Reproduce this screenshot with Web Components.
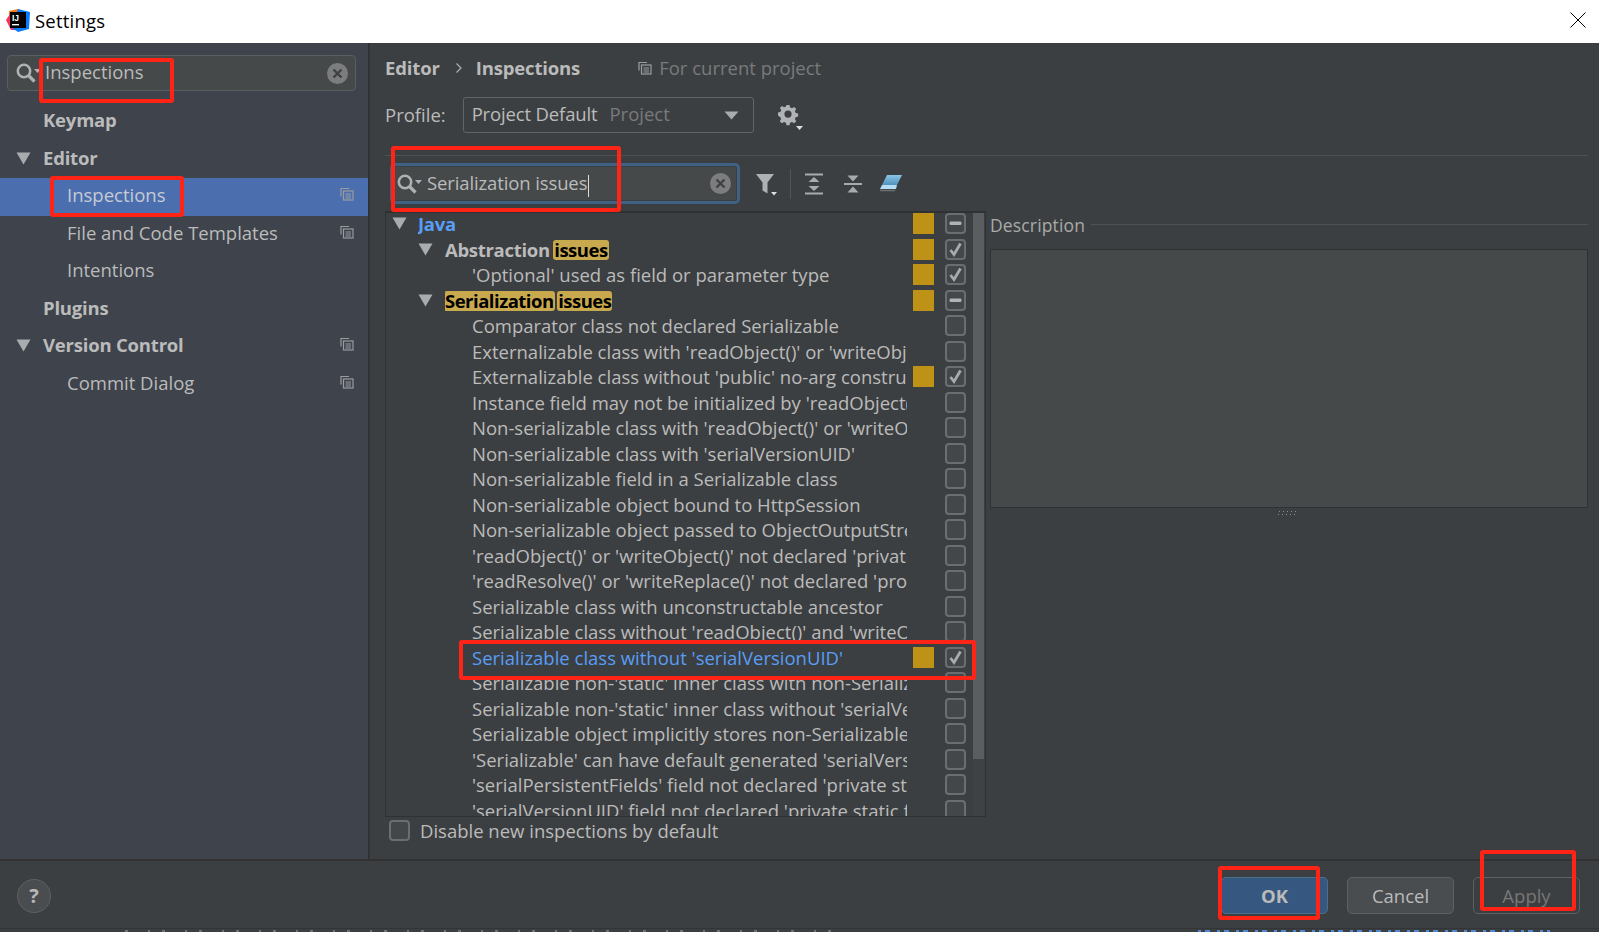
<!DOCTYPE html>
<html><head><meta charset="utf-8">
<style>
html,body{margin:0;padding:0;background:#3c3f41}
body{width:1599px;height:932px;overflow:hidden;font-family:"Open Sans","Noto Sans",sans-serif;font-size:18.5px;color:#bbb}
</style></head>
<body>
<settings-dialog></settings-dialog>
<script>
const FONT='"Open Sans","Noto Sans",sans-serif';
const def=(name,html)=>{customElements.define(name,class extends HTMLElement{
  connectedCallback(){ if(this.shadowRoot)return; const r=this.attachShadow({mode:'open'}); r.innerHTML=typeof html==='function'?html(this):html; }
});};
const copyIcon=`<svg width="14" height="14" viewBox="0 0 14 14" fill="none" stroke="#9a9da0" stroke-width="1.2"><path d="M1 9.500V1.500h8"/><rect x="3.500" y="4" width="9.500" height="9"/><path d="M5.500 7h5.500M5.500 9h5.500M5.500 11h5.500" stroke-width="1"/></svg>`;
const tri=`<svg width="15" height="13" viewBox="0 0 15 13" style="display:block"><path d="M0.500 0.500h14L7.500 12.500z" fill="#a9acae"/></svg>`;

def('x-titlebar',`<style>:host{display:flex;align-items:center;height:43px;background:#fff;color:#000;font:18.500px ${FONT};padding:0 13px 3px 6px;box-sizing:border-box}
.t{margin-left:5px;flex:1;letter-spacing:.2px}svg{display:block}</style>
<svg width="24" height="24" viewBox="0 0 24 24"><path d="M3 3L12 1 14 8 3 11z" fill="#f97a12"/><path d="M0 12L6 3 12 22 5 22z" fill="#fe315d"/><path d="M12 1L24 4 23 21 12 24 6 20z" fill="#087cfa"/><rect x="4" y="4" width="16" height="16" fill="#000"/><text x="6" y="13" font-family="Liberation Sans" font-weight="700" font-size="8.500" fill="#fff">IJ</text><rect x="6" y="16" width="7" height="1.400" fill="#fff"/></svg>
<span class="t">Settings</span>
<svg width="16" height="16" viewBox="0 0 16 16"><path d="M.5.5l15 15M15.500.5l-15 15" stroke="#000" stroke-width="1"/></svg>`);

const searchIcon=`<svg width="26" height="20" viewBox="0 0 26 20" fill="none"><circle cx="8" cy="8" r="6.200" stroke="#aeb0b2" stroke-width="2.600"/><path d="M12.500 12.500l6 6" stroke="#aeb0b2" stroke-width="3.200"/><path d="M18 6h7l-3.500 4z" fill="#aeb0b2"/></svg>`;
const clearIcon=`<svg width="21" height="21" viewBox="0 0 21 21"><circle cx="10.500" cy="10.500" r="10.500" fill="#7b7d7f"/><path d="M6.500 6.500l8 8M14.500 6.500l-8 8" stroke="#3f4142" stroke-width="2.400"/></svg>`;
def('x-search',`<style>:host{display:flex;align-items:center;box-sizing:border-box;background:#45494a;font:18.500px ${FONT};color:#bbb;
 width:var(--w);height:var(--h);border:var(--bd,1.500px solid #5b5e60);border-radius:var(--r,4px);padding:0 var(--pr,7px) 0 var(--pl,8px);outline:var(--ol,none);flex:none}
.v{flex:1;margin-left:var(--gap,2px);white-space:nowrap;padding-bottom:var(--pb,0);letter-spacing:var(--ls,0)}
svg{display:block;flex:none}</style>
${searchIcon}<span class="v"><slot></slot></span>${clearIcon}`);

def('x-nav',h=>{const lv=h.getAttribute('lv');const w=lv==='0'?43:67;return `<style>:host{display:flex;align-items:center;box-sizing:border-box;height:37.500px;padding-bottom:4px;font:18.500px ${FONT};color:#bbb}
:host([sel]){background:#4b6eaf;color:#c5cbd3}
:host([lv="0"]){font-weight:700;letter-spacing:-.2px}
.lead{flex:none;box-sizing:border-box;width:${w}px;padding-left:16px;margin-top:2px}
.tx{flex:1}
.cp{flex:none;margin:0 14px 1.500px 0;display:block;line-height:0}</style>
<span class="lead">${h.hasAttribute('open')?tri:''}</span><span class="tx"><slot></slot></span>${h.hasAttribute('proj')?`<span class="cp">${copyIcon}</span>`:''}`});

def('x-sidebar',`<style>:host{display:block;width:370px;flex:none;background:#3e434c;border-right:2px solid #323232;box-sizing:border-box;padding-top:12px}
x-search{--w:349px;--h:36px;margin-left:7px;margin-bottom:12px;--pb:4px;--gap:3px}nav{display:block}</style>
<x-search>Inspections</x-search>
<nav><x-nav lv="0">Keymap</x-nav><x-nav lv="0" open>Editor</x-nav><x-nav lv="1" sel proj>Inspections</x-nav><x-nav lv="1" proj>File and Code Templates</x-nav><x-nav lv="1">Intentions</x-nav><x-nav lv="0">Plugins</x-nav><x-nav lv="0" open proj>Version Control</x-nav><x-nav lv="1" proj>Commit Dialog</x-nav></nav>`);

def('x-check',h=>{const s=h.getAttribute('s');return `<style>:host{display:block;box-sizing:border-box;width:21px;height:21px;border:2px solid #6b6e70;border-radius:4px;background:#43474a;flex:none}svg{display:block;margin:1px}</style>
${s==='c'?`<svg width="15" height="15" viewBox="0 0 15 15"><path d="M2.500 8l3.500 4.500L12.500 1.500" fill="none" stroke="#a8aaac" stroke-width="2.800"/></svg>`:s==='m'?`<svg width="15" height="15" viewBox="0 0 15 15"><rect x="1.500" y="5.500" width="12" height="3.600" rx="1.400" fill="#b0b2b4"/></svg>`:''}`});

def('x-row',h=>{const l=+h.getAttribute('lv');const left={0:32,1:59,2:86}[l];const triLeft={0:6,1:32,2:0}[l];
return `<style>:host{display:flex;align-items:center;height:25.500px;box-sizing:border-box;font:18.500px ${FONT};color:#bbb;white-space:nowrap}
:host([bold]){font-weight:700;letter-spacing:-.3px}
:host([blue]){color:#589df6}
.lead{flex:none;box-sizing:border-box;width:${left}px;padding-left:${triLeft}px}
.tx{flex:none;width:${521-left}px;overflow:hidden;line-height:25px}
.y{flex:none;margin-left:6px;width:21px;height:21px}
:host([y]) .y{background:#be9117}
x-check{margin-left:11px}</style>
<span class="lead">${h.hasAttribute('open')?tri:''}</span><span class="tx"><slot></slot></span><span class="y"></span><x-check s="${h.getAttribute('c')||''}"></x-check>`});

def('x-hl',`<style>:host{display:inline-block;background:#c9a94e;color:#000;border-radius:3px;padding:0 1px;line-height:20px;margin:0 -1px;letter-spacing:-.5px}</style><slot></slot>`);

const rows=[
 ['0','Java','m',1,'blue bold open'],
 ['1','Abstraction <x-hl>issues</x-hl>','c',1,'bold open'],
 ['2',"'Optional' used as field or parameter type",'c',1,''],
 ['1','<x-hl>Serialization</x-hl> <x-hl>issues</x-hl>','m',1,'bold open'],
 ['2','Comparator class not declared Serializable','',0,''],
 ['2',"Externalizable class with 'readObject()' or 'writeObject()'",'',0,''],
 ['2',"Externalizable class without 'public' no-arg constructor",'c',1,''],
 ['2',"Instance field may not be initialized by 'readObject()'",'',0,''],
 ['2',"Non-serializable class with 'readObject()' or 'writeObject()'",'',0,''],
 ['2',"Non-serializable class with 'serialVersionUID'",'',0,''],
 ['2','Non-serializable field in a Serializable class','',0,''],
 ['2','Non-serializable object bound to HttpSession','',0,''],
 ['2','Non-serializable object passed to ObjectOutputStream','',0,''],
 ['2',"'readObject()' or 'writeObject()' not declared 'private'",'',0,''],
 ['2',"'readResolve()' or 'writeReplace()' not declared 'protected'",'',0,''],
 ['2','Serializable class with unconstructable ancestor','',0,''],
 ['2',"Serializable class without 'readObject()' and 'writeObject()'",'',0,''],
 ['2',"Serializable class without 'serialVersionUID'",'c',1,'blue'],
 ['2',"Serializable non-'static' inner class with non-Serializable outer",'',0,''],
 ['2',"Serializable non-'static' inner class without 'serialVersionUID'",'',0,''],
 ['2','Serializable object implicitly stores non-Serializable object','',0,''],
 ['2',"'Serializable' can have default generated 'serialVersionUID'",'',0,''],
 ['2',"'serialPersistentFields' field not declared 'private static'",'',0,''],
 ['2',"'serialVersionUID' field not declared 'private static final'",'',0,''],
];
def('x-tree',`<style>:host{display:block;position:relative;box-sizing:border-box;width:601px;height:606px;border:1px solid #2f3133;border-top:2px solid #2f3133;overflow:hidden}
.rows{margin-top:-2px}
.sb{position:absolute;left:587px;top:0;bottom:0;width:11px;background:#3f4244}.th{position:absolute;left:587px;top:0;height:546px;width:11px;background:#5a5e60}</style>
<div class="sb"></div><div class="th"></div>
<div class="rows">${rows.map(r=>`<x-row lv="${r[0]}" c="${r[2]}" ${r[3]?'y':''} ${r[4]}>${r[1]}</x-row>`).join('')}</div>`);

def('x-btn',`<style>:host{display:flex;align-items:center;justify-content:center;box-sizing:border-box;width:107px;height:37px;border-radius:5px;border:1.500px solid #5e6163;background:#4a4d4f;color:#bbb;font:18.500px ${FONT}}
:host([primary]){background:#365880;border-color:#4c708c;font-weight:700}
:host([disabled]){background:transparent;color:#777;border-color:#5e6163}</style><slot></slot>`);

def('x-toolbar',`<style>:host{display:flex;align-items:center;height:55px;margin-left:2px}
x-search{--w:344px;--h:35px;--bd:1px solid #3c3f41;--ol:3px solid #3e6185;--r:2px;--gap:4px;--pl:3px;--pr:5px;margin:0 0 0 6px;--pb:0px;--ls:-.12px}
.ic{display:flex;align-items:center;margin-left:19px}
svg{display:block}.c{display:inline-block;width:1px;height:22px;background:#ddd;vertical-align:middle;margin-left:1px}
.dv{width:1px;height:30px;background:#515557;margin:0 13px 0 12px}</style>
<x-search>Serialization issues<span class="c"></span></x-search>
<div class="ic">
<svg width="22" height="24" viewBox="0 0 22 24"><path d="M0 2h18l-6.500 8.500v11l-5-3v-8z" fill="#aeb0b2"/><path d="M15 20h6l-3 3.500z" fill="#ddd"/></svg>
<div class="dv"></div>
<svg width="20" height="22" viewBox="0 0 20 22"><path d="M1 1.500h18M1 20.500h18" stroke="#a8aaac" stroke-width="2"/><path d="M10 4l5.500 5h-11zM10 18l5.500-5h-11z" fill="#a8aaac"/></svg>
<svg style="margin-left:19px" width="20" height="22" viewBox="0 0 20 22"><path d="M1 11h18" stroke="#a8aaac" stroke-width="2"/><path d="M10 8.500l-5.500-6h11zM10 13.500l5.500 6h-11z" fill="#a8aaac"/></svg>
<svg style="margin-left:16px" width="24" height="20" viewBox="0 0 24 20"><defs><linearGradient id="er" x1="0" y1="0" x2="0" y2="1"><stop offset="0" stop-color="#8cc4e4"/><stop offset="1" stop-color="#4e93bd"/></linearGradient></defs><path d="M8 1h15l-5 10H3z" fill="url(#er)"/><path d="M3 11h15l-1 4H1z" fill="#b5dcf2"/><path d="M1 16.500h15" stroke="#6d7072" stroke-width="1.500"/></svg>
</div>`);

def('x-content',`<style>:host{display:block;flex:1;min-width:0;box-sizing:border-box;padding:0 11px 0 15px;font:18.500px ${FONT};color:#bbb}
.crumb{display:flex;align-items:center;height:25px;margin-top:12px;white-space:nowrap}
.b{font-weight:700;letter-spacing:-.15px}.chev{margin:0 13px 0 15px;display:block}
.hint{color:#787a7c;margin-left:7px}.hintic{margin-left:58px;display:block;line-height:0}
.profile{display:flex;align-items:center;margin-top:17px}
.lab{padding-bottom:2px}
.combo{display:flex;align-items:center;box-sizing:border-box;width:291px;height:36px;margin-left:17px;border:1.500px solid #646464;border-radius:3px;padding:0 14px 0 8px}
.combo span{padding-bottom:4px;letter-spacing:-.15px}
.combo i{font-style:normal;color:#787a7c;margin-left:12px;flex:1;padding-bottom:4px}
.gear{margin:4px 0 0 24px;display:block}
.sep{height:1px;background:#4f5254;margin-top:22px}
.main{display:flex;gap:4px}
.desc{flex:1;min-width:0}
.dh{display:flex;align-items:center;box-sizing:border-box;height:38px;padding-bottom:11px;color:#aaa;letter-spacing:.15px;font-size:17.500px}
.dh:after{content:"";flex:1;height:1px;background:#4f5254;margin-left:6px}
.box{height:259px;background:#45494a;border:1.500px solid #2f3133;box-sizing:border-box}
.dots{height:5px;margin-top:3px}.dots svg{display:block;margin:0 auto}
.dis{display:flex;align-items:center;gap:10px;margin-top:2px;height:22px}
.dis x-check{margin-left:4px}</style>
<div class="crumb"><span class="b">Editor</span><svg class="chev" width="8" height="12" viewBox="0 0 8 12"><path d="M1.500 1.500L6 6l-4.500 4.500" fill="none" stroke="#aaa" stroke-width="1.300"/></svg><span class="b">Inspections</span>
<span class="hintic">${copyIcon}</span><span class="hint">For current project</span></div>
<div class="profile"><span class="lab">Profile:</span><div class="combo"><span>Project Default</span><i>Project</i><svg width="15" height="9" viewBox="0 0 15 9"><path d="M.5.500h14L7.500 8.500z" fill="#a9acae"/></svg></div>
<svg class="gear" width="26" height="26" viewBox="0 0 26 26"><path fill="#b0b2b4" fill-rule="evenodd" d="M8.500 1h3l.6 2.400 1.900.8 2.100-1.300 2.100 2.100-1.300 2.100.8 1.900 2.400.6v3l-2.400.6-.8 1.900 1.300 2.100-2.100 2.100-2.100-1.300-1.900.8-.6 2.400h-3l-.6-2.400-1.900-.8-2.100 1.300-2.100-2.100 1.300-2.100-.8-1.900L0 11.600v-3l2.400-.6.8-1.900L1.900 4l2.100-2.100 2.100 1.300 1.900-.8zM10 6.500a3.600 3.600 0 1 0 0 7.200 3.600 3.600 0 0 0 0-7.200z"/><path d="M18 22h7l-3.500 4z" fill="#ddd"/></svg></div>
<div class="sep"></div>
<x-toolbar></x-toolbar>
<div class="main"><div><x-tree></x-tree>
<div class="dis"><x-check></x-check><span>Disable new inspections by default</span></div></div>
<div class="desc"><div class="dh">Description</div><div class="box"></div><div class="dots"><svg width="22" height="5" viewBox="0 0 22 5" fill="#8a8c8e"><path d="M1 0h1v1H1zM5 0h1v1H5zM9 0h1v1H9zM13 0h1v1h-1zM17 0h1v1h-1zM0 3h1v1H0zM4 3h1v1H4zM8 3h1v1H8zM12 3h1v1h-1zM16 3h1v1h-1z"/></svg></div></div></div>`);

def('x-footer',`<style>:host{display:flex;align-items:center;box-sizing:border-box;height:69px;border-top:2px solid #323232;padding:2px 19px 0 17px;gap:19px}
.help{box-sizing:border-box;width:34px;height:34px;border-radius:50%;border:1.500px solid #5e6163;background:#4a4d4f;display:flex;align-items:center;justify-content:center;font:700 20px ${FONT};color:#b5b7b9;margin-right:auto}</style>
<div class="help">?</div><x-btn primary>OK</x-btn><x-btn>Cancel</x-btn><x-btn disabled>Apply</x-btn>`);

def('x-cutoff',`<style>:host{display:flex;box-sizing:border-box;height:4px;border-top:1px solid #323436;background:#3c3f41;align-items:flex-end}
.g,.b{height:2px}
.g{margin-left:125px;width:712px;background:repeating-linear-gradient(90deg,#6f7274 0 3px,transparent 3px 23px,#6f7274 23px 25px,transparent 25px 37px)}
.b{margin-left:361px;width:352px;background:repeating-linear-gradient(90deg,#4f88d0 0 3px,transparent 3px 7px,#4f88d0 7px 12px,transparent 12px 19px)}</style><span class="g"></span><span class="b"></span>`);

def('x-mark',`<style>:host{position:absolute;box-sizing:border-box;border:4px solid #ff2415;border-radius:3px;pointer-events:none}</style>`);

def('settings-dialog',`<style>:host{display:flex;flex-direction:column;width:1599px;height:932px;position:relative;overflow:hidden;background:#3c3f41}
.body{display:flex;height:816px;flex:none}</style>
<x-titlebar></x-titlebar>
<div class="body"><x-sidebar></x-sidebar><x-content></x-content></div>
<x-footer></x-footer>
<x-cutoff></x-cutoff>
<x-mark style="left:39px;top:58px;width:135px;height:45px"></x-mark>
<x-mark style="left:50px;top:176px;width:134px;height:41px"></x-mark>
<x-mark style="left:391px;top:146px;width:230px;height:66px"></x-mark>
<x-mark style="left:459px;top:640px;width:517px;height:40px"></x-mark>
<x-mark style="left:1218px;top:866px;width:102px;height:54px"></x-mark>
<x-mark style="left:1480px;top:850px;width:96px;height:61px"></x-mark>`);
</script>
</body></html>
